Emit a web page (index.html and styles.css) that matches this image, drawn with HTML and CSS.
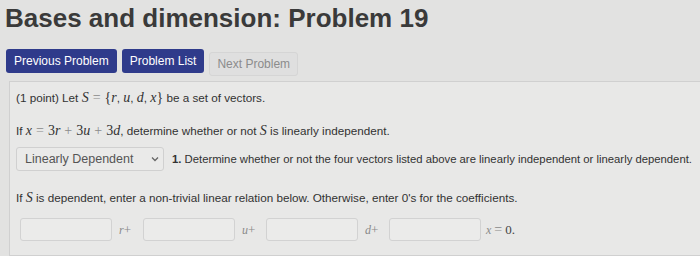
FILE: index.html
```html
<!DOCTYPE html>
<html>

<head lang="en">
  <meta charset="UTF-8">
  <title>Bases and dimension: Problem 19</title>
  <link rel="stylesheet" href="styles.css">
</head>

<body>
  <h1 class="page-title">Bases and dimension: Problem 19</h1>

  <div class="nav-buttons">
    <a href="javascript:void(0);" class="nav-btn">Previous Problem</a>
    <a href="javascript:void(0);" class="nav-btn">Problem List</a>
    <span class="nav-btn disabled">Next Problem</span>
  </div>

  <div class="problem">
    <p class="line first">(1 point) Let <i class="m">S</i><span class="op">=</span><span class="m-up">{</span><i class="m">r</i>, <i class="m">u</i>, <i class="m">d</i>, <i class="m">x</i><span class="m-up">}</span> be a set of vectors.</p>

    <p class="line second">If <i class="m">x</i><span class="op">=</span><span class="m-up">3</span><i class="m">r</i><span class="op">+</span><span class="m-up">3</span><i class="m">u</i><span class="op">+</span><span class="m-up">3</span><i class="m">d</i>, determine whether or not <i class="m">S</i> is linearly independent.</p>

    <div class="select-row">
      <div class="select-box">
        <span>Linearly Dependent</span>
        <svg class="chevron" width="8" height="6" viewBox="0 0 8 6">
          <path d="M1 1.5 L4 4.5 L7 1.5" fill="none" stroke="#666" stroke-width="1.3" />
        </svg>
      </div>
      <span class="select-label"><b>1.</b> Determine whether or not the four vectors listed above are linearly independent or linearly dependent.</span>
    </div>

    <p class="line fourth">If <i class="m">S</i> is dependent, enter a non-trivial linear relation below. Otherwise, enter 0's for the coefficients.</p>

    <div class="answer-row">
      <span class="ans-input"></span>
      <span class="coef"><i class="m">r</i>+</span>
      <span class="ans-input"></span>
      <span class="coef"><i class="m">u</i>+</span>
      <span class="ans-input"></span>
      <span class="coef"><i class="m">d</i>+</span>
      <span class="ans-input"></span>
      <span class="coef end"><i class="m">x</i><span class="op">=</span><span class="m-up">0.</span></span>
    </div>
  </div>
</body>

</html>
```

FILE: styles.css
```css
body {
  margin: 0px;
  padding: 0px;
  background: #e2e2e1;
  color: #323232;
  font-family: "Liberation Sans", Arial, sans-serif;
  font-size: 11.7px;
  overflow: hidden;
}

p,
h1 {
  margin: 0px;
  padding: 0px;
}

a {
  text-decoration: none;
}

.page-title {
  margin: 2px 0px 0px 5px;
  font-size: 26px;
  line-height: 32px;
  font-weight: bold;
  color: #3a3a3a;
}

.nav-buttons {
  display: flex;
  gap: 5px;
  margin: 15px 0px 0px 6px;
  align-items: flex-start;
}

.nav-btn {
  display: block;
  height: 24px;
  line-height: 24px;
  padding: 0px 8px;
  font-size: 12px;
  color: #ffffff;
  background: #2f3b8b;
  border-radius: 3px;
}

.nav-btn.disabled {
  margin-top: 3px;
  padding: 0px 7px;
  color: #8c8c8c;
  background: #dfdfdf;
  border: #d5d5d5 1px solid;
  height: 22px;
  line-height: 22px;
}

.problem {
  margin: 5px 0px 0px 9px;
  height: 175px;
  border-top: #d0d0d0 1px solid;
  border-left: #d0d0d0 1px solid;
  border-bottom: #d0d0d0 1px solid;
  background: #e8e8e7;
  padding: 8px 0px 0px 6px;
  box-sizing: border-box;
}

.line {
  height: 16px;
  line-height: 16px;
  white-space: nowrap;
}

.second {
  margin-top: 17px;
}

.m {
  font-family: "Liberation Serif", "Times New Roman", serif;
  font-size: 14px;
}

.m-up {
  font-family: "Liberation Serif", "Times New Roman", serif;
  font-size: 14px;
}

.op {
  font-family: "Liberation Serif", "Times New Roman", serif;
  font-size: 14px;
  color: #8a8a8a;
  margin: 0px 4px;
}

.select-row {
  display: flex;
  align-items: center;
  gap: 8px;
  margin-top: 8px;
  height: 24px;
  white-space: nowrap;
}

.select-label {
  font-size: 11.3px;
}

.select-box {
  display: flex;
  align-items: center;
  justify-content: space-between;
  width: 148px;
  height: 24px;
  padding: 0px 4px 0px 8px;
  box-sizing: border-box;
  border: #d0d0d0 1px solid;
  border-radius: 3px;
  background: #eaeae9;
  font-size: 12.5px;
  color: #555;
}

.fourth {
  margin-top: 19px;
}

.answer-row {
  display: flex;
  align-items: center;
  height: 23px;
  margin-top: 12px;
  padding-left: 4px;
}

.ans-input {
  display: block;
  width: 92px;
  height: 23px;
  box-sizing: border-box;
  border: #d2d2d2 1px solid;
  border-radius: 3px;
  background: #ebebea;
}

.coef {
  display: block;
  width: 31px;
  padding-left: 7px;
  box-sizing: border-box;
  color: #8a8a8a;
  font-family: "Liberation Serif", "Times New Roman", serif;
  font-size: 13px;
}

.coef .m {
  color: #8a8a8a;
  font-size: 12px;
}

.coef.end {
  width: auto;
  padding-left: 5px;
}

.coef.end .op {
  margin: 0px 3px;
}

.coef.end .m-up {
  color: #444;
  font-size: 13px;
}
```
